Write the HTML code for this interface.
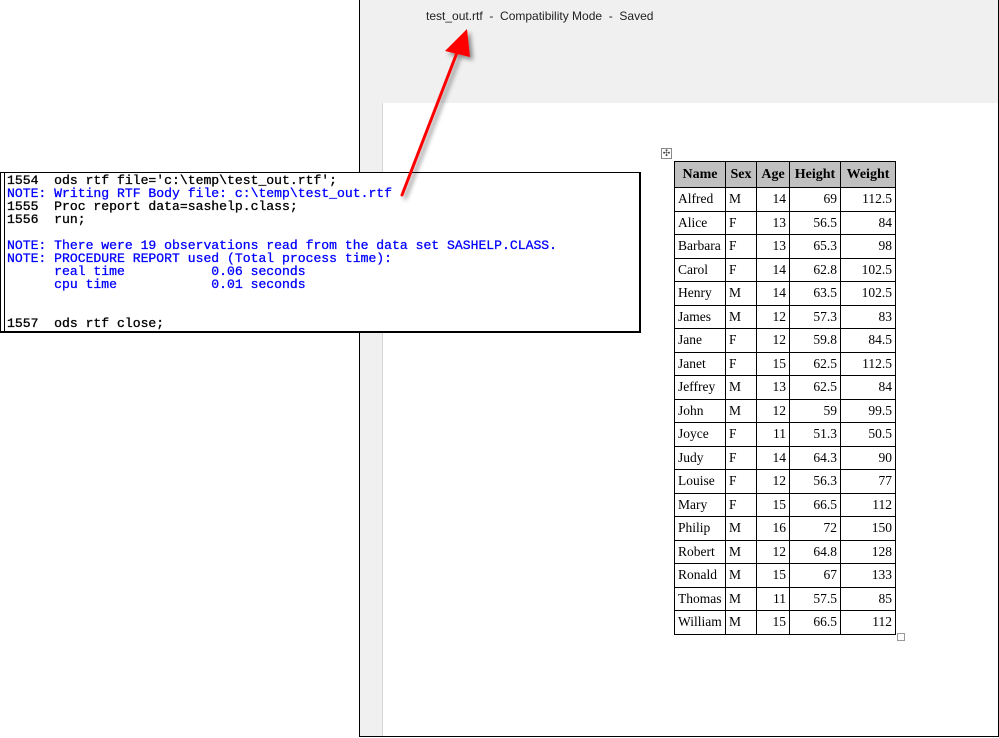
<!DOCTYPE html>
<html><head><style>
body{margin:0;width:999px;height:738px;background:#fff;position:relative;overflow:hidden}
.win{position:absolute;left:359px;top:0;width:638px;height:736px;border:1px solid #000;border-top:none;background:#f0f0f0}
.page{position:absolute;left:382px;top:103px;width:615px;height:633px;background:#fff;border-left:1px solid #d6d6d6}
.title{position:absolute;left:426px;top:9px;font:12px "Liberation Sans",sans-serif;color:#222;white-space:pre}
.log{position:absolute;left:0;top:172px;width:638px;height:158px;border:1px solid #000;border-width:1px 2px 2px 1px;background:#fff;overflow:hidden}
.log:before{content:"";position:absolute;left:3px;top:0;bottom:0;border-left:1px solid #000}
.log pre{margin:0;position:absolute;left:6px;top:1px;font:13.1px/13px "Liberation Mono",monospace;color:#000;-webkit-text-stroke:0.3px}
.b{color:#0000ff}
table{position:absolute;left:674px;top:161px;border-collapse:collapse;font:13.5px "Liberation Serif",serif}
td{border:1px solid #000;height:22.5px;padding:0 3px}
th{border:1px solid #000;background:#c0c0c0;height:25px;padding:0 2px;font-weight:bold;font-size:14px}
td.r{text-align:right}
.mv{position:absolute;left:661px;top:148px;width:9px;height:9px;border:1px solid #888;font:9px/9px sans-serif;text-align:center;color:#444}
.rs{position:absolute;left:897px;top:633px;width:6px;height:6px;border:1px solid #999}
</style></head><body>
<div class="win"></div>
<div class="page"></div>
<div class="title">test_out.rtf  -  Compatibility Mode  -  Saved</div>
<div class="mv">✣</div>
<table>
<tr><th style="width:46px">Name</th><th style="width:26px">Sex</th><th style="width:28px">Age</th><th style="width:46px">Height</th><th style="width:50px">Weight</th></tr>
<tr><td>Alfred</td><td>M</td><td class="r">14</td><td class="r">69</td><td class="r">112.5</td></tr>
<tr><td>Alice</td><td>F</td><td class="r">13</td><td class="r">56.5</td><td class="r">84</td></tr>
<tr><td>Barbara</td><td>F</td><td class="r">13</td><td class="r">65.3</td><td class="r">98</td></tr>
<tr><td>Carol</td><td>F</td><td class="r">14</td><td class="r">62.8</td><td class="r">102.5</td></tr>
<tr><td>Henry</td><td>M</td><td class="r">14</td><td class="r">63.5</td><td class="r">102.5</td></tr>
<tr><td>James</td><td>M</td><td class="r">12</td><td class="r">57.3</td><td class="r">83</td></tr>
<tr><td>Jane</td><td>F</td><td class="r">12</td><td class="r">59.8</td><td class="r">84.5</td></tr>
<tr><td>Janet</td><td>F</td><td class="r">15</td><td class="r">62.5</td><td class="r">112.5</td></tr>
<tr><td>Jeffrey</td><td>M</td><td class="r">13</td><td class="r">62.5</td><td class="r">84</td></tr>
<tr><td>John</td><td>M</td><td class="r">12</td><td class="r">59</td><td class="r">99.5</td></tr>
<tr><td>Joyce</td><td>F</td><td class="r">11</td><td class="r">51.3</td><td class="r">50.5</td></tr>
<tr><td>Judy</td><td>F</td><td class="r">14</td><td class="r">64.3</td><td class="r">90</td></tr>
<tr><td>Louise</td><td>F</td><td class="r">12</td><td class="r">56.3</td><td class="r">77</td></tr>
<tr><td>Mary</td><td>F</td><td class="r">15</td><td class="r">66.5</td><td class="r">112</td></tr>
<tr><td>Philip</td><td>M</td><td class="r">16</td><td class="r">72</td><td class="r">150</td></tr>
<tr><td>Robert</td><td>M</td><td class="r">12</td><td class="r">64.8</td><td class="r">128</td></tr>
<tr><td>Ronald</td><td>M</td><td class="r">15</td><td class="r">67</td><td class="r">133</td></tr>
<tr><td>Thomas</td><td>M</td><td class="r">11</td><td class="r">57.5</td><td class="r">85</td></tr>
<tr><td>William</td><td>M</td><td class="r">15</td><td class="r">66.5</td><td class="r">112</td></tr>
</table>
<div class="rs"></div>
<div class="log"><pre>1554  ods rtf file='c:\temp\test_out.rtf';
<span class="b">NOTE: Writing RTF Body file: c:\temp\test_out.rtf</span>
1555  Proc report data=sashelp.class;
1556  run;

<span class="b">NOTE: There were 19 observations read from the data set SASHELP.CLASS.
NOTE: PROCEDURE REPORT used (Total process time):
      real time           0.06 seconds
      cpu time            0.01 seconds</span>


1557  ods rtf close;</pre></div>
<svg style="position:absolute;left:0;top:0" width="999" height="738">
<defs><filter id="s" x="-50%" y="-50%" width="200%" height="200%"><feDropShadow dx="3" dy="3" stdDeviation="2.5" flood-color="#000" flood-opacity="0.45"/></filter></defs>
<g filter="url(#s)" fill="#ff0000">
<line x1="402" y1="195" x2="458" y2="50" stroke="#ff0000" stroke-width="3" stroke-linecap="round"/>
<polygon points="467,29 445,51 470,57"/>
</g>
</svg>
</body></html>
